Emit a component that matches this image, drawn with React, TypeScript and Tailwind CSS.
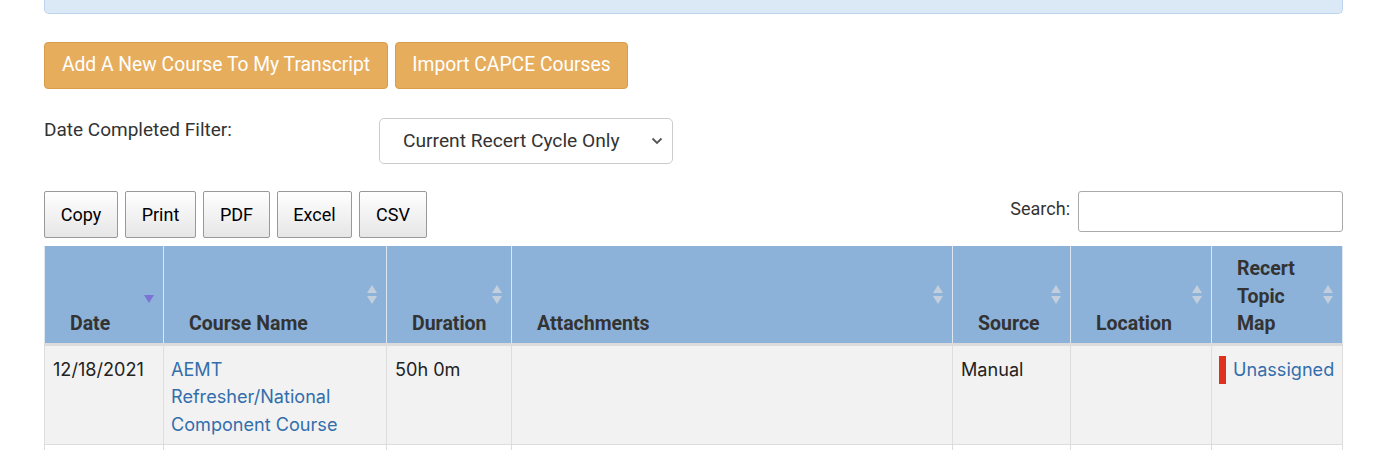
import React from 'react';

// sort arrows shown at the right side of each header cell
const SortIcon: React.FC<{ active?: boolean }> = ({ active }) =>
  active ? (
    <svg width="12" height="12" viewBox="0 0 12 12" className="absolute right-[8px] top-[47px]">
      <polygon points="1,2 11,2 6,10" fill="#7b73d6" />
    </svg>
  ) : (
    <svg width="12" height="22" viewBox="0 0 12 22" className="absolute right-[8px] top-[38px]">
      <polygon points="6,1 11,9 1,9" fill="#c3cfdc" />
      <polygon points="1,12 11,12 6,20" fill="#c3cfdc" />
    </svg>
  );

const columns = [
  { label: 'Date', width: 'w-[119px]', active: true },
  { label: 'Course Name', width: 'w-[223px]' },
  { label: 'Duration', width: 'w-[125px]' },
  { label: 'Attachments', width: 'w-[441px]' },
  { label: 'Source', width: 'w-[118px]' },
  { label: 'Location', width: 'w-[141px]' },
  { label: 'Recert Topic Map', width: 'w-[131px]' },
];

const App: React.FC = () => {
  return (
    <div className="w-[1380px] h-[450px] overflow-hidden bg-white font-['Roboto',sans-serif] text-[#333]">
      <div className="ml-[44px] w-[1299px]">
        {/* info box cut off at the top */}
        <div className="h-[14px] bg-[#dbe9f6] border border-t-0 border-[#bcd5ec] rounded-b-[5px]" />

        {/* action buttons */}
        <div className="flex gap-[7px] mt-[28px]">
          <button className="h-[47px] w-[344px] bg-[#e6ad5d] border border-[#d99c48] rounded-[4px] text-white text-[19.3px]">
            Add A New Course To My Transcript
          </button>
          <button className="h-[47px] w-[233px] bg-[#e6ad5d] border border-[#d99c48] rounded-[4px] text-white text-[19.3px]">
            Import CAPCE Courses
          </button>
        </div>

        {/* filter */}
        <div className="flex mt-[29px]">
          <div className="w-[335px] text-[19px] leading-[24px]">Date Completed Filter:</div>
          <div className="w-[294px] h-[46px] flex items-center justify-between pl-[23px] pr-[9px] border border-[#ccc] rounded-[5px] text-[19.2px]">
            <span>Current Recert Cycle Only</span>
            <svg width="12" height="8" viewBox="0 0 12 8">
              <polyline points="1.5,1.5 6,6 10.5,1.5" fill="none" stroke="#555" strokeWidth="1.8" />
            </svg>
          </div>
        </div>

        {/* export buttons and search */}
        <div className="flex justify-between mt-[27px]">
          <div className="flex gap-[7px]">
            {[
              ['Copy', 'w-[74px]'],
              ['Print', 'w-[71px]'],
              ['PDF', 'w-[67px]'],
              ['Excel', 'w-[75px]'],
              ['CSV', 'w-[68px]'],
            ].map(([b, w]) => (
              <button
                key={b}
                className={`${w} h-[47px] bg-linear-to-b from-white to-[#e6e6e6] border border-[#999] rounded-[2px] text-black text-[18px]`}
              >
                {b}
              </button>
            ))}
          </div>
          <div className="flex items-start">
            <span className="text-[18px] mt-[4px] mr-[8px] text-[#333]">Search:</span>
            <input className="w-[265px] h-[41px] border border-[#aaa] rounded-[3px] bg-white" />
          </div>
        </div>

        {/* table */}
        <table className="mt-[8px] w-[1299px] table-fixed border-collapse">
          <thead>
            <tr className="bg-[#8cb2d9]">
              {columns.map((c) => (
                <th
                  key={c.label}
                  className={`${c.width} relative h-[98px] align-bottom text-left font-bold text-[19.5px] leading-[27.5px] text-[#333] pl-[25px] pr-[30px] pb-[5px] border-x border-[#dde7f1] border-b-[3px] border-b-[#dcdcdc]`}
                >
                  {c.label === 'Recert Topic Map' ? (
                    <span className="block w-[70px]">{c.label}</span>
                  ) : (
                    c.label
                  )}
                  <SortIcon active={c.active} />
                </th>
              ))}
            </tr>
          </thead>
          <tbody className="font-['Inter',sans-serif]">
            <tr className="bg-[#f2f2f2] align-top text-[18.1px] leading-[27.5px] text-[#222]">
              <td className="h-[100px] px-[8px] pt-[10px] border border-[#ddd]">12/18/2021</td>
              <td className="px-[7px] pt-[10px] border border-[#ddd] text-[#336eac]">
                AEMT Refresher/National Component Course
              </td>
              <td className="px-[8px] pt-[10px] border border-[#ddd]">50h 0m</td>
              <td className="px-[8px] pt-[10px] border border-[#ddd]"></td>
              <td className="px-[8px] pt-[10px] border border-[#ddd]">Manual</td>
              <td className="px-[8px] pt-[10px] border border-[#ddd]"></td>
              <td className="pl-[7px] pr-[2px] pt-[10px] border border-[#ddd]">
                <div className="flex items-start whitespace-nowrap">
                  <span className="inline-block w-[7px] h-[28px] bg-[#e0301e] mr-[7px]" />
                  <span className="text-[#336eac]">Unassigned</span>
                </div>
              </td>
            </tr>
            <tr className="bg-white">
              <td className="h-[30px] border border-[#ddd]" />
              <td className="border border-[#ddd]" />
              <td className="border border-[#ddd]" />
              <td className="border border-[#ddd]" />
              <td className="border border-[#ddd]" />
              <td className="border border-[#ddd]" />
              <td className="border border-[#ddd]" />
            </tr>
          </tbody>
        </table>
      </div>
    </div>
  );
};

export default App;
